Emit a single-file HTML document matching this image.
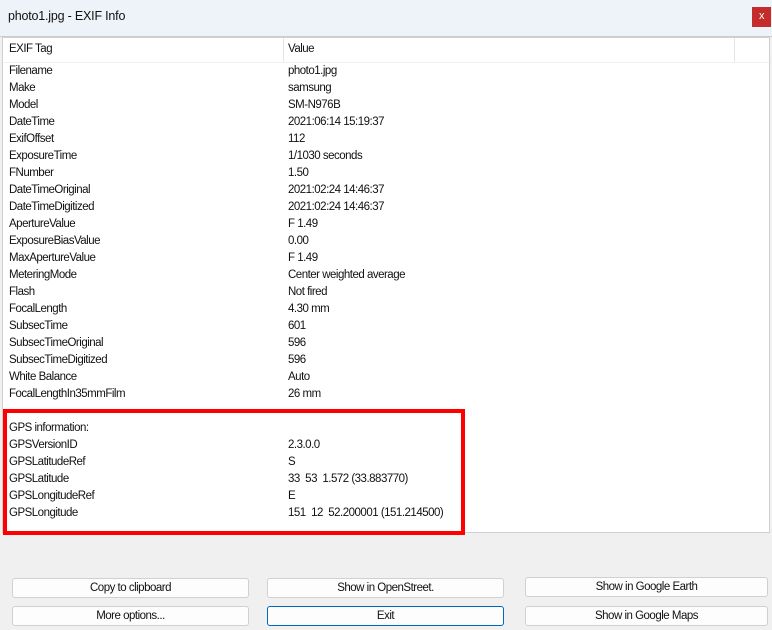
<!DOCTYPE html>
<html><head><meta charset="utf-8"><style>
body{margin:0;width:772px;height:630px;background:#f0f0f0;font-family:"Liberation Sans",sans-serif;font-size:11.5px;color:#111;position:relative;overflow:hidden;letter-spacing:-0.5px}
.title{position:absolute;left:0;top:0;width:772px;height:36px;background:#eef3f9;border-bottom:1px solid #ccc}
.title span{position:absolute;left:8px;top:9px;font-size:12.5px;letter-spacing:-0.2px}
.close{position:absolute;left:752px;top:7px;width:19px;height:20px;background:#c42b2b;color:#fff;font-size:11px;text-align:center;line-height:19px}
.list{position:absolute;left:2px;top:37px;width:768px;height:496px;background:#fff;border:1px solid #d0d0d0;box-sizing:border-box}
.hd{position:absolute;left:0;top:0;width:100%;height:24px;border-bottom:1px solid #f0f0f0}
.div{position:absolute;top:0;width:1px;height:24px;background:#e5e5e5}
.r{position:absolute;height:17px;line-height:17px;white-space:pre;margin-top:1px}
.red{position:absolute;left:3px;top:409px;width:462px;height:126px;border:4px solid #f00;box-sizing:border-box}
.btn{position:absolute;height:20px;background:#fdfdfd;border:1px solid #d0d0d0;border-radius:3px;box-sizing:border-box;text-align:center;line-height:19px;font-size:11.5px}
.exit{border-color:#0067c0}
</style></head><body>
<div class="title"><span>photo1.jpg - EXIF Info</span><div class="close">x</div></div>
<div class="list"><div class="hd"><div class="div" style="left:280px"></div><div class="div" style="left:731px"></div></div></div>
<div class="r" style="left:9px;top:40px">EXIF Tag</div><div class="r" style="left:288px;top:40px">Value</div>
<div class="r" style="left:9px;top:62px">Filename</div><div class="r" style="left:288px;top:62px">photo1.jpg</div>
<div class="r" style="left:9px;top:79px">Make</div><div class="r" style="left:288px;top:79px">samsung</div>
<div class="r" style="left:9px;top:96px">Model</div><div class="r" style="left:288px;top:96px">SM-N976B</div>
<div class="r" style="left:9px;top:113px">DateTime</div><div class="r" style="left:288px;top:113px">2021:06:14 15:19:37</div>
<div class="r" style="left:9px;top:130px">ExifOffset</div><div class="r" style="left:288px;top:130px">112</div>
<div class="r" style="left:9px;top:147px">ExposureTime</div><div class="r" style="left:288px;top:147px">1/1030 seconds</div>
<div class="r" style="left:9px;top:164px">FNumber</div><div class="r" style="left:288px;top:164px">1.50</div>
<div class="r" style="left:9px;top:181px">DateTimeOriginal</div><div class="r" style="left:288px;top:181px">2021:02:24 14:46:37</div>
<div class="r" style="left:9px;top:198px">DateTimeDigitized</div><div class="r" style="left:288px;top:198px">2021:02:24 14:46:37</div>
<div class="r" style="left:9px;top:215px">ApertureValue</div><div class="r" style="left:288px;top:215px">F 1.49</div>
<div class="r" style="left:9px;top:232px">ExposureBiasValue</div><div class="r" style="left:288px;top:232px">0.00</div>
<div class="r" style="left:9px;top:249px">MaxApertureValue</div><div class="r" style="left:288px;top:249px">F 1.49</div>
<div class="r" style="left:9px;top:266px">MeteringMode</div><div class="r" style="left:288px;top:266px">Center weighted average</div>
<div class="r" style="left:9px;top:283px">Flash</div><div class="r" style="left:288px;top:283px">Not fired</div>
<div class="r" style="left:9px;top:300px">FocalLength</div><div class="r" style="left:288px;top:300px">4.30 mm</div>
<div class="r" style="left:9px;top:317px">SubsecTime</div><div class="r" style="left:288px;top:317px">601</div>
<div class="r" style="left:9px;top:334px">SubsecTimeOriginal</div><div class="r" style="left:288px;top:334px">596</div>
<div class="r" style="left:9px;top:351px">SubsecTimeDigitized</div><div class="r" style="left:288px;top:351px">596</div>
<div class="r" style="left:9px;top:368px">White Balance</div><div class="r" style="left:288px;top:368px">Auto</div>
<div class="r" style="left:9px;top:385px">FocalLengthIn35mmFilm</div><div class="r" style="left:288px;top:385px">26 mm</div>
<div class="r" style="left:9px;top:419px">GPS information:</div>
<div class="r" style="left:9px;top:436px">GPSVersionID</div><div class="r" style="left:288px;top:436px">2.3.0.0</div>
<div class="r" style="left:9px;top:453px">GPSLatitudeRef</div><div class="r" style="left:288px;top:453px">S</div>
<div class="r" style="left:9px;top:470px">GPSLatitude</div><div class="r" style="left:288px;top:470px">33  53  1.572 (33.883770)</div>
<div class="r" style="left:9px;top:487px">GPSLongitudeRef</div><div class="r" style="left:288px;top:487px">E</div>
<div class="r" style="left:9px;top:504px">GPSLongitude</div><div class="r" style="left:288px;top:504px">151  12  52.200001 (151.214500)</div>
<div class="red"></div>
<div class="btn" style="left:12px;top:578px;width:237px">Copy to clipboard</div>
<div class="btn" style="left:267px;top:578px;width:237px">Show in OpenStreet.</div>
<div class="btn" style="left:525px;top:577px;width:243px">Show in Google Earth</div>
<div class="btn" style="left:12px;top:606px;width:237px">More options...</div>
<div class="btn exit" style="left:267px;top:606px;width:237px">Exit</div>
<div class="btn" style="left:525px;top:606px;width:243px">Show in Google Maps</div>
</body></html>
